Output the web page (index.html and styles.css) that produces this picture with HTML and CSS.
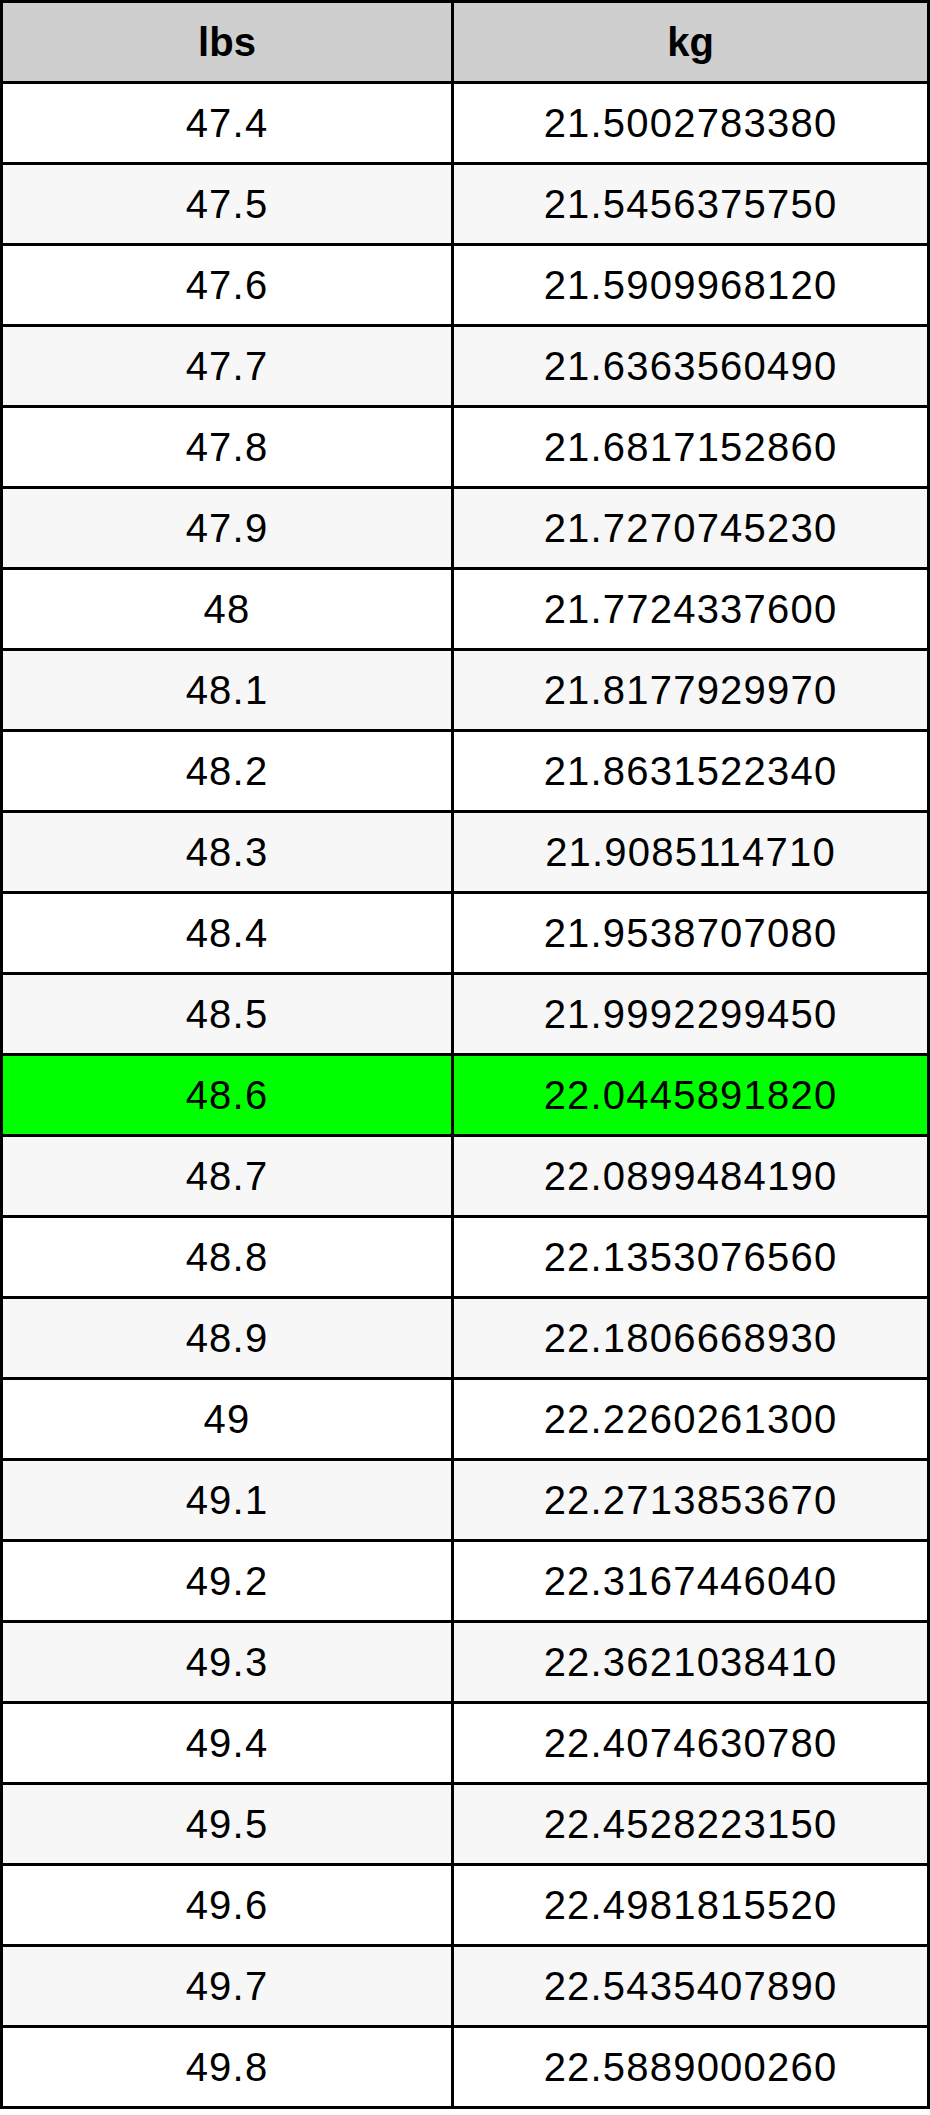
FILE: index.html
```html
<!DOCTYPE html>
<html>
<head>
<meta charset="utf-8">
<link rel="stylesheet" href="styles.css">
</head>
<body>
<table class="conv">
<thead>
<tr><th class="c1">lbs</th><th class="c2">kg</th></tr>
</thead>
<tbody>
<tr><td>47.4</td><td>21.5002783380</td></tr>
<tr><td>47.5</td><td>21.5456375750</td></tr>
<tr><td>47.6</td><td>21.5909968120</td></tr>
<tr><td>47.7</td><td>21.6363560490</td></tr>
<tr><td>47.8</td><td>21.6817152860</td></tr>
<tr><td>47.9</td><td>21.7270745230</td></tr>
<tr><td>48</td><td>21.7724337600</td></tr>
<tr><td>48.1</td><td>21.8177929970</td></tr>
<tr><td>48.2</td><td>21.8631522340</td></tr>
<tr><td>48.3</td><td>21.9085114710</td></tr>
<tr><td>48.4</td><td>21.9538707080</td></tr>
<tr><td>48.5</td><td>21.9992299450</td></tr>
<tr class="hl"><td>48.6</td><td>22.0445891820</td></tr>
<tr><td>48.7</td><td>22.0899484190</td></tr>
<tr><td>48.8</td><td>22.1353076560</td></tr>
<tr><td>48.9</td><td>22.1806668930</td></tr>
<tr><td>49</td><td>22.2260261300</td></tr>
<tr><td>49.1</td><td>22.2713853670</td></tr>
<tr><td>49.2</td><td>22.3167446040</td></tr>
<tr><td>49.3</td><td>22.3621038410</td></tr>
<tr><td>49.4</td><td>22.4074630780</td></tr>
<tr><td>49.5</td><td>22.4528223150</td></tr>
<tr><td>49.6</td><td>22.4981815520</td></tr>
<tr><td>49.7</td><td>22.5435407890</td></tr>
<tr><td>49.8</td><td>22.5889000260</td></tr>
</tbody>
</table>
</body>
</html>
```

FILE: styles.css
```css
html, body {
  margin: 0;
  padding: 0;
  background: #ffffff;
}
.conv {
  table-layout: fixed;
  width: 930px;
  border-collapse: separate;
  border-spacing: 3px;
  background: #000000;
  font-family: "Liberation Sans", Arial, sans-serif;
  font-size: 40px;
  color: #000000;
}
.conv th,
.conv td {
  height: 78px;
  padding: 0;
  text-align: center;
  vertical-align: middle;
  line-height: 46px;
}
.conv th {
  background: #cfcfcf;
  font-weight: bold;
}
.conv td {
  letter-spacing: 1.2px;
}
.conv .c1 { width: 448px; }
.conv .c2 { width: 473px; }
.conv tbody tr td { background: #ffffff; }
.conv tbody tr:nth-child(even) td { background: #f7f7f7; }
.conv tbody tr.hl td { background: #00ff00; }
```
